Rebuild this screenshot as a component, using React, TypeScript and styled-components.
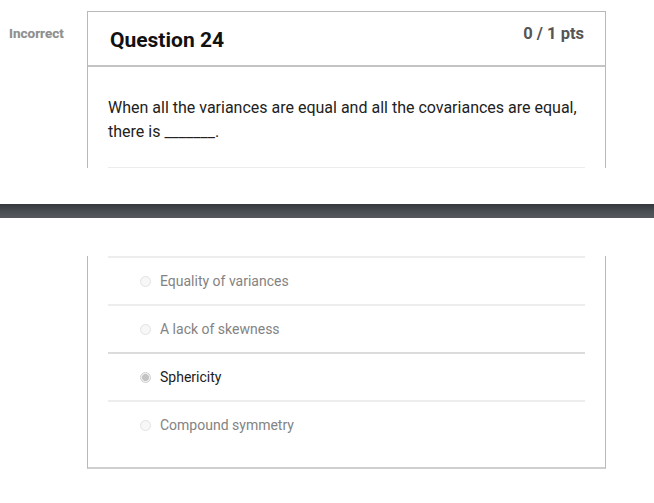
import styled, { createGlobalStyle } from 'styled-components';

const GlobalStyle = createGlobalStyle`
    body {
        margin: 0;
        background: #fff;
        font-family: Roboto, "Liberation Sans", Arial, sans-serif;
        color: #222;
    }
`;

const answers = [
    { text: 'Equality of variances', selected: false },
    { text: 'A lack of skewness', selected: false },
    { text: 'Sphericity', selected: true },
    { text: 'Compound symmetry', selected: false },
];

export default function App() {
    return (
        <Page>
            <GlobalStyle />
            <Row>
                <Status>Incorrect</Status>
                <CardTop>
                    <Header>
                        <Title>Question 24</Title>
                        <Points>0 / 1 pts</Points>
                    </Header>
                    <Body>
                        <QuestionText>
                            When all the variances are equal and all the covariances are equal,
                            there is _______.
                        </QuestionText>
                        <Divider />
                    </Body>
                </CardTop>
            </Row>
            <Gap />
            <Bar />
            <Gap $height={38} />
            <Row>
                <StatusSpacer />
                <CardBottom>
                    <AnswerList>
                        {answers.map((a) => (
                            <Answer key={a.text} $selected={a.selected}>
                                <Radio $selected={a.selected} />
                                <AnswerText $selected={a.selected}>{a.text}</AnswerText>
                            </Answer>
                        ))}
                    </AnswerList>
                </CardBottom>
            </Row>
        </Page>
    );
}

const Page = styled.div`
    width: 654px;
    padding-top: 11px;
`;

const Row = styled.div`
    display: flex;
    align-items: flex-start;
`;

const Status = styled.div`
    width: 87px;
    box-sizing: border-box;
    padding: 15px 0 0 9px;
    font-size: 13.5px;
    line-height: 14px;
    font-weight: 700;
    color: #8f8f8f;
    text-shadow: 0 0 1px rgba(0, 0, 0, 0.15);
`;

const StatusSpacer = styled.div`
    width: 87px;
`;

const CardTop = styled.div`
    width: 519px;
    box-sizing: border-box;
    border: 1px solid #b9b9b9;
    border-bottom: none;
`;

const CardBottom = styled.div`
    width: 519px;
    box-sizing: border-box;
    border: 1px solid #b9b9b9;
    border-top: none;
    border-bottom-width: 2px;
    border-bottom-color: #cfcfcf;
    padding: 0 20px 19px;
`;

const Header = styled.div`
    height: 53px;
    display: flex;
    align-items: center;
    justify-content: space-between;
    padding: 0 21px 0 22px;
    border-bottom: 2px solid #c4c4c4;
`;

const Title = styled.h2`
    margin: 2px 0 0;
    font-size: 21px;
    line-height: 24px;
    font-weight: 700;
    color: #111;
`;

const Points = styled.div`
    align-self: flex-start;
    margin-top: 14px;
    font-size: 16.5px;
    line-height: 16px;
    font-weight: 700;
    color: #555;
`;

const Body = styled.div`
    padding: 29px 20px 0;
`;

const QuestionText = styled.p`
    margin: 0 0 23px;
    font-size: 16px;
    line-height: 24px;
    color: #222;
`;

const Divider = styled.div`
    height: 1px;
    background: #ececec;
`;

const Gap = styled.div<{ $height?: number }>`
    height: ${(p) => p.$height ?? 36}px;
`;

const Bar = styled.div`
    height: 14px;
    background: linear-gradient(#34373b, #4a4f54 55%, #55595e);
`;

const AnswerList = styled.div`
    display: flex;
    flex-direction: column;
`;

const Answer = styled.div<{ $selected: boolean }>`
    height: 48px;
    display: flex;
    align-items: center;
    padding-left: 32px;
    border-top: ${(p) => (p.$selected ? '2px solid #dcdcdc' : '2px solid #ededed')};
    box-sizing: border-box;
`;

const Radio = styled.span<{ $selected: boolean }>`
    width: 11px;
    height: 11px;
    border-radius: 50%;
    box-sizing: border-box;
    border: 1px solid ${(p) => (p.$selected ? '#cfcfcf' : '#e3e3e3')};
    background: ${(p) =>
        p.$selected ? 'radial-gradient(circle, #c4c4c4 0 3.2px, #f2f2f2 3.8px)' : '#f7f7f7'};
    margin-right: 9px;
`;

const AnswerText = styled.span<{ $selected: boolean }>`
    font-size: 14px;
    color: ${(p) => (p.$selected ? '#1c1c1c' : '#838383')};
`;
